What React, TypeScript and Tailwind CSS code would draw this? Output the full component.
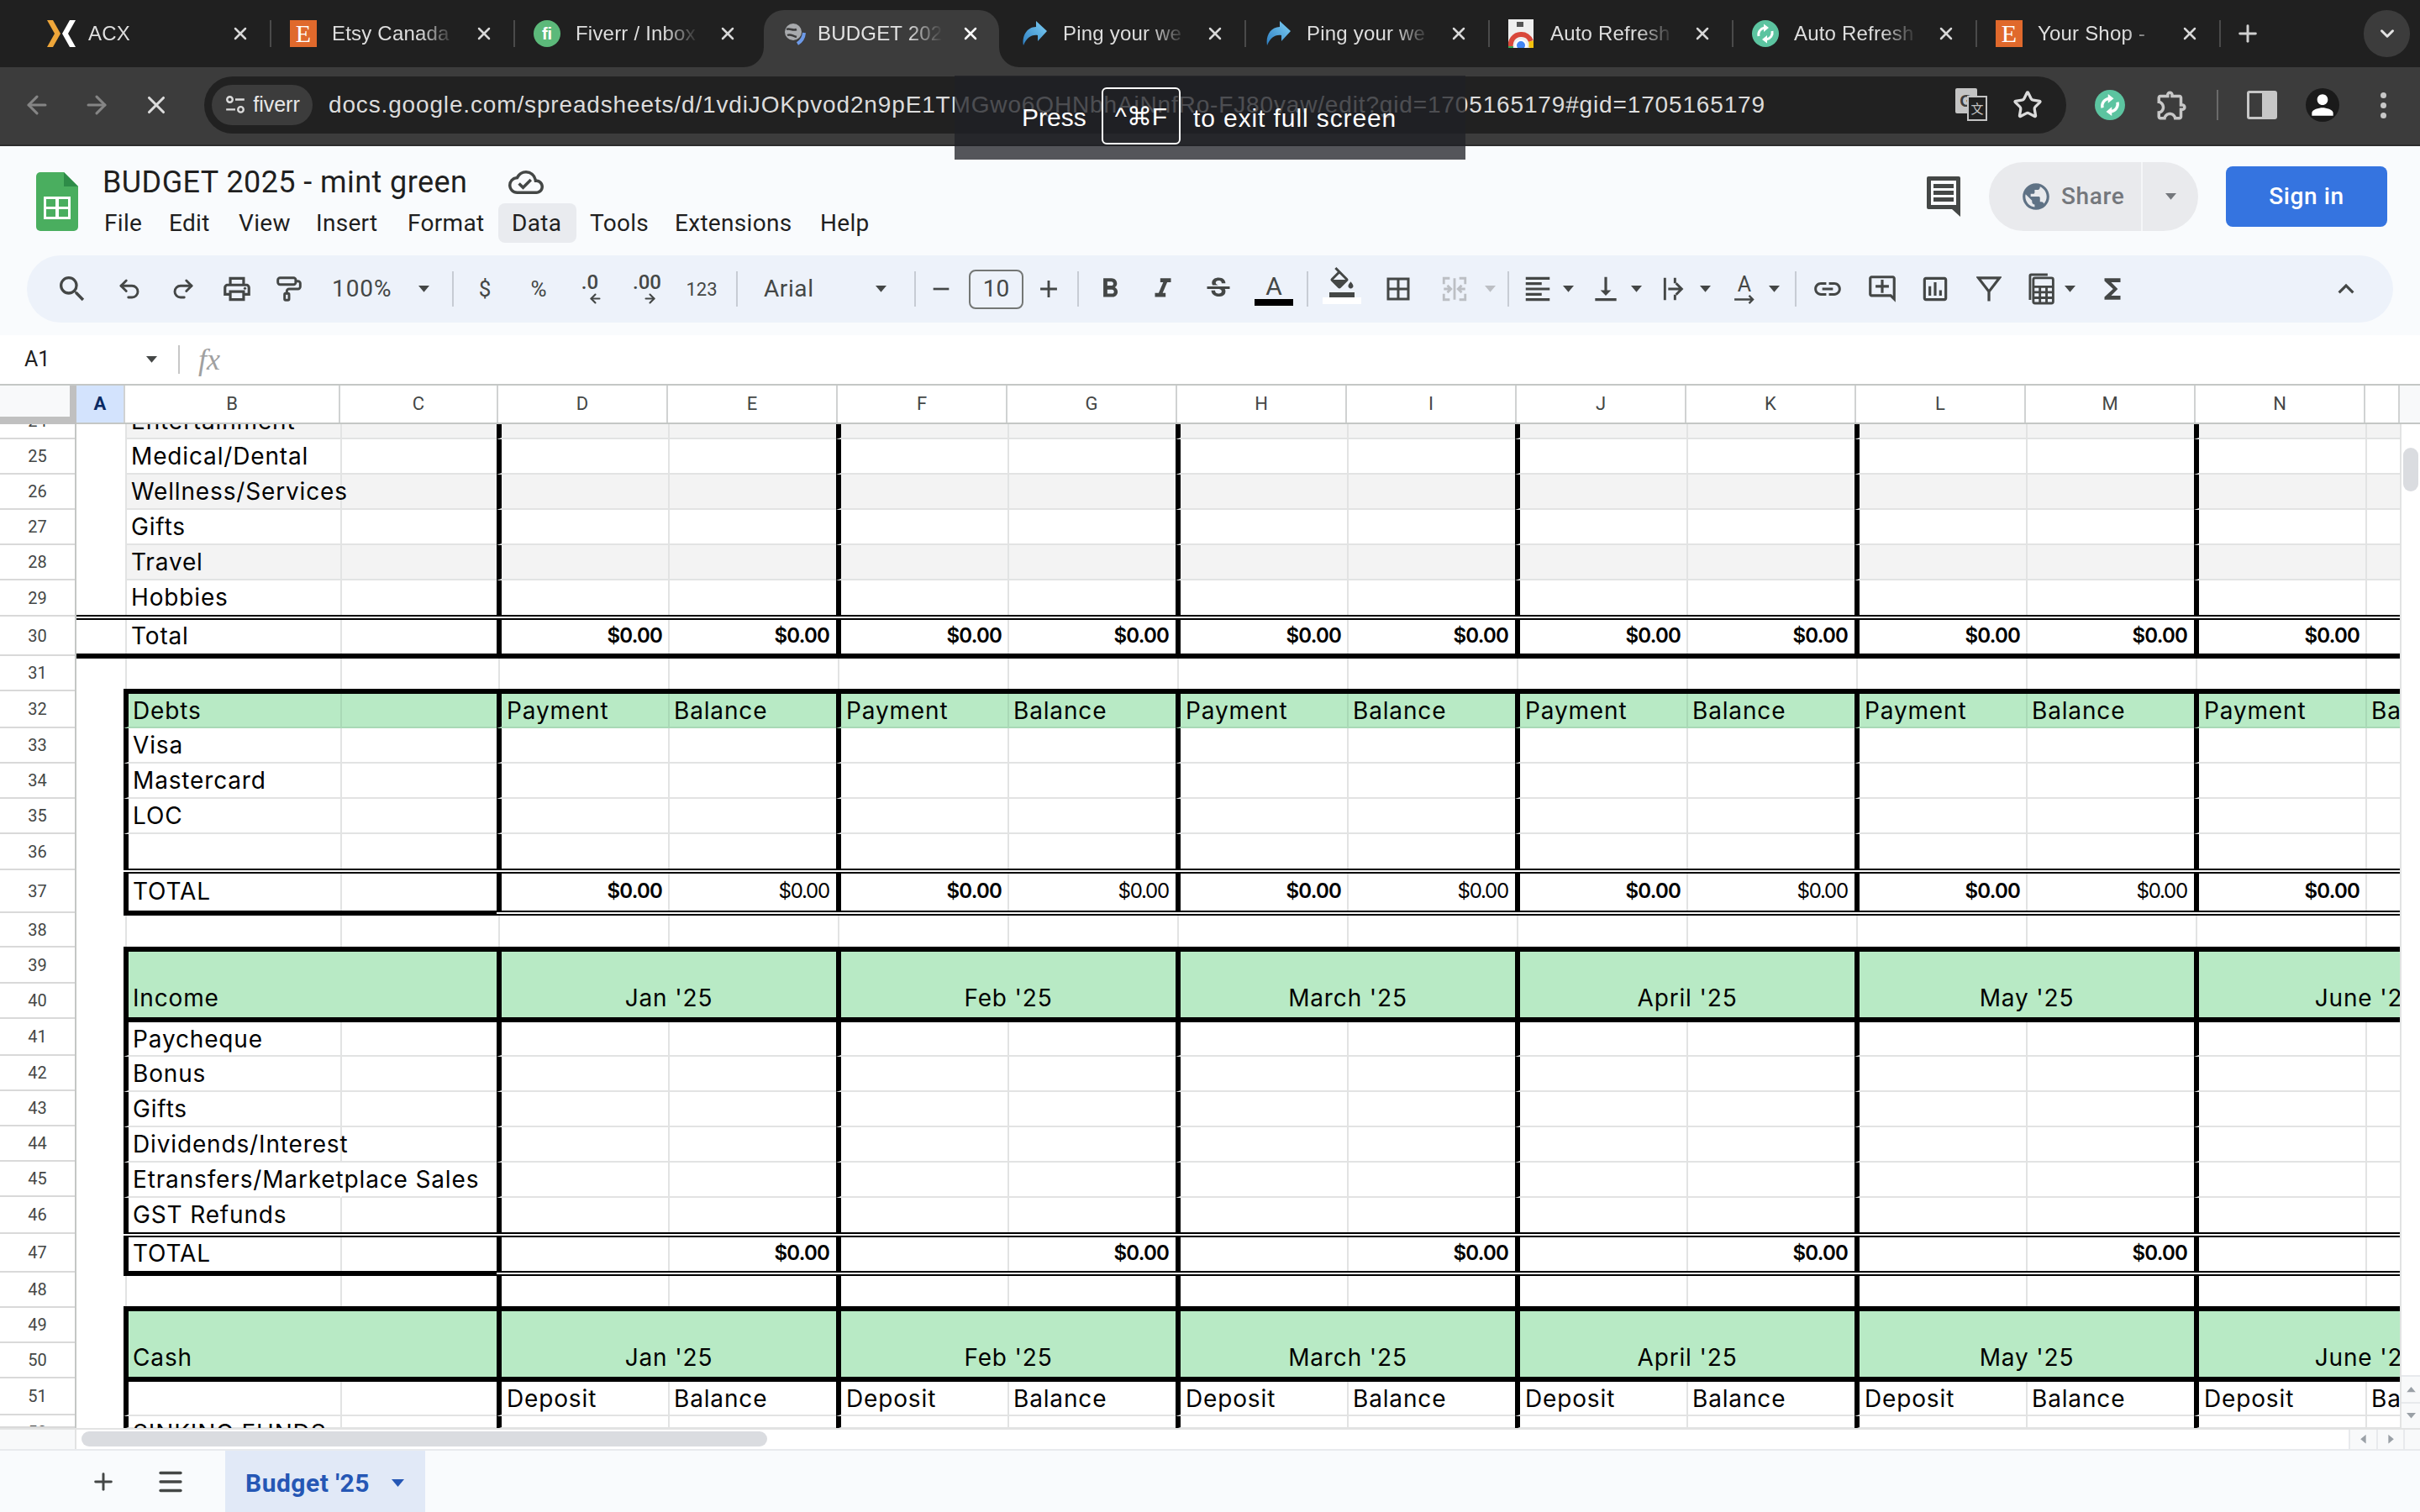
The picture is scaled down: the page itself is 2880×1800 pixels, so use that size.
import React from "react";
import { ArrowLeft, ArrowRight, X, Plus, Star, ChevronDown, Undo2, Redo2, PaintRoller, Menu } from "lucide-react";
import {
  MdSearch, MdOutlinePrint, MdFormatBold, MdFormatItalic, MdStrikethroughS, MdOutlineFormatColorFill,
  MdBorderAll, MdFormatAlignLeft, MdVerticalAlignBottom, MdOutlineAddComment, MdOutlineInsertChart,
  MdLink, MdFunctions, MdExpandLess, MdRemove, MdAdd, MdOutlineExtension, MdPerson, MdPublic,
  MdOutlineCloudDone,
} from "react-icons/md";

const G = "#444746";

function Caret({ color = G, w = 13 }: { color?: string; w?: number }) {
  return (
    <svg width={w} height={w * 0.6} viewBox="0 0 10 6" className="shrink-0">
      <path d="M0 0h10L5 6z" fill={color} />
    </svg>
  );
}

function RefreshCircle({ size = 32 }: { size?: number }) {
  return (
    <svg width={size} height={size} viewBox="0 0 32 32" className="shrink-0">
      <circle cx="16" cy="16" r="16" fill="#5cc4a0" />
      <path d="M8 19c-1-5 2-9 7-10" fill="none" stroke="#fff" strokeWidth="3" />
      <path d="M14 4.5l6 4.500-6 5z" fill="#fff" />
      <path d="M24 13c1 5-2 9-7 10" fill="none" stroke="#fff" strokeWidth="3" />
      <path d="M18 27.500l-6-4.500 6-5z" fill="#fff" />
    </svg>
  );
}

function AcxIcon() {
  return (
    <svg width="36" height="32" viewBox="0 0 36 32" className="shrink-0">
      <path d="M1 0h7l9 16-9 16H1l9-16z" fill="#eea63a" />
      <path d="M35 0h-7l-9 16 9 16h7l-9-16z" fill="#fff" />
    </svg>
  );
}

function EtsyIcon() {
  return (
    <div className="w-8 h-8 shrink-0 bg-[#e0692c] flex items-center justify-center text-white text-[30px] leading-8 [font-family:'Liberation_Serif',serif]">
      E
    </div>
  );
}

function FiverrIcon() {
  return (
    <div className="w-8 h-8 shrink-0 rounded-full bg-[#5cb97a] flex items-center justify-center text-white text-[20px] font-bold leading-8">
      fi
    </div>
  );
}

function SheetsSpin() {
  return (
    <svg width="28" height="28" viewBox="0 0 28 28" className="shrink-0">
      <circle cx="12" cy="12" r="10" fill="#a8aaad" />
      <path d="M4 9c4-2 7 2 12 0M5 16c4-2 6 1 11 2" stroke="#3c3c3c" strokeWidth="2.500" fill="none" />
      <path d="M25 13c-.5 6-3 10-8 13" stroke="#6d9ae8" strokeWidth="4" fill="none" />
    </svg>
  );
}

function PingIcon() {
  return (
    <svg width="32" height="34" viewBox="0 0 32 34" className="shrink-0">
      <defs>
        <linearGradient id="pg" x1="0" y1="1" x2="1" y2="0">
          <stop offset="0" stopColor="#2d7fc2" />
          <stop offset="1" stopColor="#7fd0f5" />
        </linearGradient>
      </defs>
      <path d="M18 2l13 12-11 12v-7C12 18 7 22 3 31 1 20 7 9 18 9z" fill="url(#pg)" />
    </svg>
  );
}

function ChromeCard() {
  return (
    <svg width="30" height="34" viewBox="0 0 30 34" className="shrink-0">
      <rect width="30" height="34" fill="#efefef" />
      <rect x="10" y="3" width="8" height="6" fill="#555" />
      <path d="M3 34a12 13 0 0 1 12-16 12 13 0 0 1 12 8" fill="none" stroke="#d9483b" strokeWidth="6" />
      <path d="M27 26a12 13 0 0 1 0 8" fill="none" stroke="#f4c20d" strokeWidth="6" />
      <path d="M3 34v-2" stroke="#3aa757" strokeWidth="6" />
      <circle cx="15" cy="31" r="6" fill="#4285f4" stroke="#fff" strokeWidth="2" />
    </svg>
  );
}

const tabs: { icon: React.ReactNode; title: string }[] = [
  { icon: <AcxIcon />, title: "ACX" },
  { icon: <EtsyIcon />, title: "Etsy Canada" },
  { icon: <FiverrIcon />, title: "Fiverr / Inbox" },
  { icon: <SheetsSpin />, title: "BUDGET 202" },
  { icon: <PingIcon />, title: "Ping your we" },
  { icon: <PingIcon />, title: "Ping your we" },
  { icon: <ChromeCard />, title: "Auto Refresh" },
  { icon: <RefreshCircle />, title: "Auto Refresh" },
  { icon: <EtsyIcon />, title: "Your Shop -" },
];

function TabStrip() {
  return (
    <div className="h-20 bg-[#202020] flex pl-[33px] shrink-0 [font-family:'Liberation_Sans',sans-serif]">
      {tabs.map((t, i) =>
        i === 3 ? (
          <div key={i} className="relative w-[280px] h-[68px] mt-3 ml-[6px] mr-1 bg-[#3c3c3c] rounded-t-[24px] flex items-center pb-3 pl-[23px] shrink-0">
            <svg width="24" height="24" viewBox="0 0 24 24" className="absolute -left-6 bottom-0">
              <path d="M24 0v24H0A24 24 0 0 0 24 0z" fill="#3c3c3c" />
            </svg>
            <svg width="24" height="24" viewBox="0 0 24 24" className="absolute -right-6 bottom-0">
              <path d="M0 0v24h24A24 24 0 0 1 0 0z" fill="#3c3c3c" />
            </svg>
            {t.icon}
            <div className="ml-[13px] w-[152px] overflow-hidden whitespace-nowrap text-[24px] tracking-[0.2px] text-[#e3e3e3] [mask-image:linear-gradient(90deg,#000_70%,transparent_98%)]">{t.title}</div>
            <X size={24} color="#fff" strokeWidth={2.500} className="ml-[18px] shrink-0" />
          </div>
        ) : (
          <div key={i} className="w-[290px] h-20 flex items-center shrink-0 relative">
            <div className="w-[72px] pl-[22px] shrink-0">{t.icon}</div>
            <div className="w-[150px] overflow-hidden whitespace-nowrap text-[24px] tracking-[0.2px] text-[#dedede] [mask-image:linear-gradient(90deg,#000_70%,transparent_98%)]">{t.title}</div>
            <X size={24} color="#d8d8d8" strokeWidth={2.500} className="ml-[19px] shrink-0" />
            {i !== 2 && <div className="ml-auto w-0.5 h-8 bg-[#4a4a4a]" />}
          </div>
        )
      )}
      <div className="ml-3 w-10 h-20 flex items-center justify-center shrink-0">
        <Plus size={32} color="#d0d0d0" strokeWidth={2.200} />
      </div>
      <div className="ml-auto mr-3 mt-3 w-[55px] h-14 rounded-full bg-[#3c3c3c] flex items-center justify-center">
        <ChevronDown size={26} color="#e3e3e3" strokeWidth={2.800} />
      </div>
    </div>
  );
}

function ChromeToolbar() {
  return (
    <div className="h-[94px] bg-[#3c3c3c] border-b-2 border-[#2c2c2c] flex items-center shrink-0 pb-[2px] [font-family:'Liberation_Sans',sans-serif]">
      <ArrowLeft size={34} color="#858585" strokeWidth={2.200} className="ml-[27px] shrink-0" />
      <ArrowRight size={34} color="#858585" strokeWidth={2.200} className="ml-[37px] shrink-0" />
      <X size={34} color="#dcdcdc" strokeWidth={2.200} className="ml-[37px] shrink-0" />
      <div className="ml-10 w-[2216px] h-[68px] rounded-full bg-[#212121] flex items-center shrink-0">
        <div className="ml-[9px] w-[120px] h-12 rounded-full bg-[#3c3c3c] flex items-center justify-center gap-[8px] shrink-0">
          <svg width="26" height="26" viewBox="0 0 24 24" fill="none" stroke="#dcdcdc" strokeWidth="2.200">
            <circle cx="6" cy="6" r="3" />
            <path d="M12 6h10M2 17h10" />
            <circle cx="18" cy="17" r="3" />
          </svg>
          <span className="text-[25px] text-[#e8e8e8]">fiverr</span>
        </div>
        <div className="ml-[19px] flex-1 min-w-0 overflow-hidden whitespace-nowrap text-[28px] tracking-[0.85px] text-[#dcdcdc]">
          docs.google.com/spreadsheets/d/1vdiJOKpvod2n9pE1TMGwo6QHNbhAiNnfRo-FJ80vaw/edit?gid=1705165179#gid=1705165179
        </div>
        <div className="w-10 h-10 ml-4 relative shrink-0">
          <div className="absolute left-0 top-0 w-[26px] h-[30px] rounded-[2px] bg-[#c4c4c4] text-[#3c3c3c] text-[20px] font-bold leading-[30px] text-center">G</div>
          <div className="absolute left-[14px] top-[9px] w-[24px] h-[30px] border-2 border-[#c4c4c4] bg-[#212121] text-[#c4c4c4] text-[15px] leading-[26px] text-center [font-family:'Noto_Sans_CJK_SC',sans-serif]">文</div>
        </div>
        <Star size={36} color="#dcdcdc" strokeWidth={2.200} className="ml-[28px] mr-[28px] shrink-0" />
      </div>
      <div className="ml-[34px] shrink-0"><RefreshCircle size={36} /></div>
      <MdOutlineExtension size={42} color="#c7c7c7" className="ml-[35px] shrink-0" />
      <div className="ml-[32px] w-0.5 h-9 bg-[#6a6a6a] shrink-0" />
      <div className="ml-[34px] w-9 h-[34px] rounded-[3px] border-[3px] border-[#c7c7c7] flex justify-end shrink-0">
        <div className="w-[15px] h-full bg-[#c7c7c7]" />
      </div>
      <div className="ml-[34px] w-10 h-10 rounded-full bg-[#1a1a1a] flex items-center justify-center overflow-hidden shrink-0">
        <MdPerson size={38} color="#fff" />
      </div>
      <div className="ml-[49px] flex flex-col gap-[5px] shrink-0">
        <div className="w-[7px] h-[7px] rounded-full bg-[#c7c7c7]" />
        <div className="w-[7px] h-[7px] rounded-full bg-[#c7c7c7]" />
        <div className="w-[7px] h-[7px] rounded-full bg-[#c7c7c7]" />
      </div>
    </div>
  );
}

function FullscreenHint() {
  return (
    <div className="absolute left-[1136px] top-[90px] w-[608px] h-[100px] bg-[rgba(32,33,38,0.76)] flex items-center pl-20 text-white text-[30px] [font-family:'Liberation_Sans',sans-serif]">
      <span className="w-[95px] mt-[-1px] shrink-0">Press</span>
      <span className="w-[94px] h-[68px] mt-[-4px] border-2 border-white rounded-[6px] flex items-center justify-center text-[30px] shrink-0">^⌘F</span>
      <span className="ml-[15px] tracking-[0.9px] whitespace-nowrap">to exit full screen</span>
    </div>
  );
}

function SheetsLogo() {
  return (
    <svg width="50" height="70" viewBox="0 0 50 70" className="shrink-0">
      <path d="M5 0h28l17 17v48a5 5 0 0 1-5 5H5a5 5 0 0 1-5-5V5a5 5 0 0 1 5-5z" fill="#4aae5f" />
      <path d="M33 0l17 17H33z" fill="#2e8c48" />
      <rect x="9" y="29" width="32" height="27" fill="#fff" />
      <rect x="12" y="32" width="11" height="9" fill="#4aae5f" />
      <rect x="27" y="32" width="11" height="9" fill="#4aae5f" />
      <rect x="12" y="44" width="11" height="9" fill="#4aae5f" />
      <rect x="27" y="44" width="11" height="9" fill="#4aae5f" />
    </svg>
  );
}

function CommentBubble() {
  return (
    <svg width="40" height="48" viewBox="0 0 40 48" className="shrink-0">
      <path d="M2 0h36a2 2 0 0 1 2 2v46l-10-9H2a2 2 0 0 1-2-2V2a2 2 0 0 1 2-2z" fill={G} />
      <rect x="5" y="5" width="30" height="29" fill="#f9fbfd" />
      <rect x="8" y="9" width="24" height="5" fill={G} />
      <rect x="8" y="17" width="24" height="5" fill={G} />
      <rect x="8" y="25" width="24" height="5" fill={G} />
    </svg>
  );
}

const menus: [string, string][] = [
  ["File", "w-[79px]"], ["Edit", "w-[83px]"], ["View", "w-[92px]"], ["Insert", "w-[109px]"],
  ["Format", "w-[108px]"], ["Data", "w-[93px] pl-4 bg-[#e9ebef] rounded-lg"], ["Tools", "w-[117px] pl-4"],
  ["Extensions", "w-[173px]"], ["Help", "w-[80px]"],
];

function DecIcon({ label, dir }: { label: string; dir: "l" | "r" }) {
  return (
    <div className="flex flex-col items-center text-[#444746] leading-none">
      <span className="text-[24px] font-medium h-[22px] leading-[22px]">{label}</span>
      {dir === "l" ? <ArrowLeft size={17} strokeWidth={3} className="ml-3" /> : <ArrowRight size={17} strokeWidth={3} className="ml-2" />}
    </div>
  );
}

const Sep = ({ ml }: { ml: string }) => <div className={"w-0.5 h-[42px] bg-[#c7ccd4] shrink-0 " + ml} />;
const Ic = ({ ml, children }: { ml: string; children: React.ReactNode }) => (
  <div className={"w-10 h-10 flex items-center justify-center shrink-0 " + ml}>{children}</div>
);
const Cr = ({ ml, color }: { ml: string; color?: string }) => (
  <div className={"w-3 flex justify-center shrink-0 " + ml}><Caret color={color} /></div>
);

function SheetsToolbar() {
  return (
    <div className="mx-8 h-20 rounded-full bg-[#edf2fa] flex items-center shrink-0 [font-family:Roboto,sans-serif] text-[#444746]">
      <Ic ml="ml-[34px]"><MdSearch size={40} color={G} /></Ic>
      <Ic ml="ml-[28px]"><Undo2 size={30} color={G} strokeWidth={2.300} /></Ic>
      <Ic ml="ml-[24px]"><Redo2 size={30} color={G} strokeWidth={2.300} /></Ic>
      <Ic ml="ml-[24px]"><MdOutlinePrint size={38} color={G} /></Ic>
      <Ic ml="ml-[22px]"><PaintRoller size={32} color={G} strokeWidth={2.200} /></Ic>
      <span className="ml-[31px] w-[74px] text-[28px] tracking-[0.9px] shrink-0">100%</span>
      <Cr ml="ml-[29px]" />
      <Sep ml="ml-[28px]" />
      <Ic ml="ml-[17px]"><span className="text-[26px]">$</span></Ic>
      <Ic ml="ml-[24px]"><span className="text-[26px]">%</span></Ic>
      <Ic ml="ml-[21px]"><DecIcon label=".0" dir="l" /></Ic>
      <Ic ml="ml-[28px]"><DecIcon label=".00" dir="r" /></Ic>
      <Ic ml="ml-[25px]"><span className="text-[22px]">123</span></Ic>
      <Sep ml="ml-[21px]" />
      <span className="ml-[31px] w-[90px] text-[28px] tracking-[0.6px] shrink-0">Arial</span>
      <Cr ml="ml-[43px]" />
      <Sep ml="ml-[34px]" />
      <Ic ml="ml-[10px]"><MdRemove size={32} color={G} /></Ic>
      <div className="ml-[13px] w-[65px] h-[47px] rounded-lg border-2 border-[#747775] flex items-center justify-center text-[28px] shrink-0">10</div>
      <Ic ml="ml-[10px]"><MdAdd size={34} color={G} /></Ic>
      <Sep ml="ml-[14px]" />
      <Ic ml="ml-[17px]"><MdFormatBold size={38} color={G} /></Ic>
      <Ic ml="ml-[23px]"><MdFormatItalic size={38} color={G} /></Ic>
      <Ic ml="ml-[26px]"><MdStrikethroughS size={36} color={G} /></Ic>
      <div className={"w-10 flex flex-col items-center shrink-0 ml-[26px] pt-[2px]"}>
        <span className="text-[30px] leading-[30px]">A</span>
        <div className="w-[46px] h-2 bg-black shrink-0" />
      </div>
      <Sep ml="ml-[19px]" />
      <div className={"w-10 flex flex-col items-center shrink-0 ml-[20px] -mt-2"}>
        <MdOutlineFormatColorFill size={36} color={G} />
        <div className="w-[46px] h-2 bg-white shrink-0" />
      </div>
      <Ic ml="ml-[27px]"><MdBorderAll size={36} color={G} /></Ic>
      <Ic ml="ml-[27px]">
        <svg width="34" height="34" viewBox="0 0 24 24" fill="none" stroke="#bcbfc4" strokeWidth="2">
          <path d="M3 8V3h5M16 3h5v5M21 16v5h-5M8 21H3v-5M3 12h6M6 9l3 3-3 3M21 12h-6M18 9l-3 3 3 3M12 3v18" />
        </svg>
      </Ic>
      <Cr ml="ml-[16px]" color="#bcbfc4" />
      <Sep ml="ml-[15px]" />
      <Ic ml="ml-[14px]"><MdFormatAlignLeft size={38} color={G} /></Ic>
      <Cr ml="ml-[10px]" />
      <Ic ml="ml-[19px]"><MdVerticalAlignBottom size={38} color={G} /></Ic>
      <Cr ml="ml-[10px]" />
      <Ic ml="ml-[19px]">
        <svg width="32" height="32" viewBox="0 0 24 24" fill="none" stroke={G} strokeWidth="2.200">
          <path d="M4 2v20M13 2v5M13 17v5M7 12h11M14 7l5 5-5 5" />
        </svg>
      </Ic>
      <Cr ml="ml-[11px]" />
      <Ic ml="ml-[21px]">
        <div className="relative w-8 h-9 flex flex-col items-center">
          <span className="text-[25px] leading-[25px]">A</span>
          <svg width="30" height="12" viewBox="0 0 30 12" fill="none" stroke={G} strokeWidth="2.500">
            <path d="M2 6h24M21 1l5 5-5 5" />
          </svg>
        </div>
      </Ic>
      <Cr ml="ml-[9px]" />
      <Sep ml="ml-[19px]" />
      <Ic ml="ml-[17px]"><MdLink size={38} color={G} /></Ic>
      <Ic ml="ml-[25px]"><MdOutlineAddComment size={38} color={G} /></Ic>
      <Ic ml="ml-[23px]"><MdOutlineInsertChart size={38} color={G} /></Ic>
      <Ic ml="ml-[24px]">
        <svg width="30" height="34" viewBox="0 0 24 27" fill="none" stroke={G} strokeWidth="2.600">
          <path d="M2 3h20l-10 13zM12 15v10" />
        </svg>
      </Ic>
      <Ic ml="ml-[22px]">
        <svg width="34" height="40" viewBox="0 0 26 30" fill="none" stroke={G} strokeWidth="2.200">
          <path d="M3 25V3q0-1 1-1h15" />
          <rect x="6" y="5" width="18" height="23" rx="1.500" />
          <path d="M6 13h18M6 18h18M6 23h18M12 13v15M18 13v15" />
        </svg>
      </Ic>
      <Cr ml="ml-[8px]" />
      <Ic ml="ml-[25px]"><MdFunctions size={38} color={G} /></Ic>
      <div className="ml-auto mr-[36px] w-10 h-10 flex items-center justify-center shrink-0">
        <MdExpandLess size={38} color={G} />
      </div>
    </div>
  );
}

function SheetsHeader() {
  return (
    <div className="h-[225px] bg-[#f9fbfd] shrink-0 flex flex-col [font-family:Roboto,sans-serif]">
      <div className="h-[130px] flex shrink-0">
        <div className="ml-[43px] mt-[31px] shrink-0"><SheetsLogo /></div>
        <div className="ml-[29px] pt-[21px] shrink-0">
          <div className="flex items-center h-11">
            <span className="text-[36px] text-[#1f1f1f] leading-[44px] tracking-[0.42px]">BUDGET 2025 - mint green</span>
            <MdOutlineCloudDone size={42} color={G} className="ml-[49px] shrink-0" />
          </div>
          <div className="flex mt-[3px] text-[28px] text-[#1f1f1f] tracking-[0.3px]">
            {menus.map(([m, c], i) => (
              <div key={m} className={"h-[47px] leading-[47px] shrink-0 " + (i === 0 ? "pl-0.5 " : "") + c}>{m}</div>
            ))}
          </div>
        </div>
        <div className="ml-auto h-[120px] flex items-center mr-[39px]">
          <CommentBubble />
          <div className="ml-[34px] w-[249px] h-[82px] rounded-full bg-[#e9eaed] flex shrink-0">
            <div className="w-[183px] flex items-center pl-[37px] border-r-2 border-[#f5f6f8]">
              <MdPublic size={38} color="#5f7285" />
              <span className="ml-[11px] text-[28px] font-medium tracking-[0.6px] text-[#74777c]">Share</span>
            </div>
            <div className="flex-1 flex items-center justify-center"><Caret color="#74777c" /></div>
          </div>
          <div className="ml-[33px] w-[192px] h-[72px] rounded-lg bg-[#3574e0] text-white text-[28px] tracking-[0.6px] font-medium flex items-center justify-center shrink-0">Sign in</div>
        </div>
      </div>
      <SheetsToolbar />
    </div>
  );
}

function FormulaBar() {
  return (
    <div className="h-[58px] bg-white flex items-center shrink-0 [font-family:Roboto,sans-serif]">
      <span className="ml-[29px] w-[145px] text-[25px] text-[#1f1f1f]">A1</span>
      <Caret />
      <div className="ml-[25px] w-0.5 h-[34px] bg-[#c7c7c7]" />
      <span className="ml-[22px] text-[36px] leading-[40px] italic text-[#a0a0a0] [font-family:'Liberation_Serif',serif]">fx</span>
    </div>
  );
}

const headCols: [string, string][] = [
  ["A", "w-[58px] bg-[#d3e3fd] text-[#0b2a63] font-bold"], ["B", "w-[256px]"], ["C", "w-[188px]"],
  ["D", "w-[202px]"], ["E", "w-[202px]"], ["F", "w-[202px]"], ["G", "w-[202px]"], ["H", "w-[202px]"],
  ["I", "w-[202px]"], ["J", "w-[202px]"], ["K", "w-[202px]"], ["L", "w-[202px]"], ["M", "w-[202px]"],
  ["N", "w-[202px]"], ["", "w-[41px]"],
];

function ColumnHeader() {
  return (
    <div className="h-12 flex shrink-0 bg-white border-t-2 border-[#c4c7c5] text-[22px] text-[#444746] [font-family:Roboto,sans-serif]">
      <div className="w-[91px] h-[46px] shrink-0 bg-[#c0c0c0] pr-2 pb-[9px]">
        <div className="w-full h-full bg-[#f8f9fa]" />
      </div>
      <div className="flex flex-1 border-b-2 border-[#c4c7c5]">
        {headCols.map(([l, c]) => (
          <div key={l + c} className={"h-full flex items-center justify-center pb-[2px] border-r-2 border-[#d0d2d2] shrink-0 " + c}>{l}</div>
        ))}
        <div className="flex-1 bg-[#f8f9fa]" />
      </div>
    </div>
  );
}

const labels: [number, string][] = [
  [24, "h-[18px]"], [25, "h-[42px]"], [26, "h-[42px]"], [27, "h-[42px]"], [28, "h-[42px]"], [29, "h-[43px]"],
  [30, "h-[47px]"], [31, "h-[42px]"], [32, "h-[44px]"], [33, "h-[42px]"], [34, "h-[42px]"], [35, "h-[42px]"],
  [36, "h-[43px]"], [37, "h-[51px]"], [38, "h-[41px]"], [39, "h-[43px]"], [40, "h-[42px]"], [41, "h-[44px]"],
  [42, "h-[42px]"], [43, "h-[42px]"], [44, "h-[42px]"], [45, "h-[42px]"], [46, "h-[44px]"], [47, "h-[46px]"],
  [48, "h-[42px]"], [49, "h-[42px]"], [50, "h-[42px]"], [51, "h-[44px]"], [52, "h-[15px]"],
];

function RowLabels() {
  return (
    <div className="w-[91px] shrink-0 bg-white border-r-2 border-[#c4c7c5] [font-family:Roboto,sans-serif] text-[20px] text-[#444746]">
      {labels.map(([n, h]) => (
        <div
          key={n}
          className={
            "overflow-hidden flex justify-center border-b-2 border-[#d9d9d9] " +
            h + " " + (n === 24 ? "items-end" : n === 52 ? "items-start" : "items-center")
          }
        >
          <span className="leading-[40px] shrink-0">{n}</span>
        </div>
      ))}
    </div>
  );
}

const cellFont = "text-[28px] tracking-[0.85px] text-black [font-family:Inter,sans-serif] font-normal";

type RowProps = {
  h: string;
  label?: string;
  values?: string[];
  left?: boolean;
  thick?: boolean;
  band?: boolean;
  border?: boolean;
  green?: boolean;
  noC?: boolean;
  clip?: "top" | "bottom";
};

const dWidth = "w-[204px] border-l-[6px] border-l-black";
const eWidth = "w-[200px] border-l-2";

function Value({ v, even }: { v: string; even: boolean }) {
  if (!v) return null;
  if (v === "$0.00" || v === "$0.00b") {
    const bold = v === "$0.00b";
    return (
      <div className={"w-full text-right text-[24px] " + (even ? "pr-[7px] " : "pr-2 ") + (bold ? "font-semibold tracking-[-0.8px]" : "font-normal tracking-[-1.2px]")}>
        $0.00
      </div>
    );
  }
  return <div className={even ? "pl-[6px]" : "pl-[5px]"}>{v}</div>;
}

function Row({ h, label, values, left, thick = true, band, border = true, green, noC, clip }: RowProps) {
  const bg = green ? "bg-[#b8eac5]" : band ? "bg-[#f3f3f3]" : "bg-white";
  const lineB = border ? (green ? "border-b-2 border-b-[#a9d9b6]" : "border-b-2 border-b-[#e2e3e3]") : "pb-[2px]";
  const thinCol = green ? "border-l-[#a9d9b6]" : "border-l-[#e2e3e3]";
  const base = "h-full shrink-0 flex whitespace-nowrap " + (clip === "top" ? "items-end " : clip === "bottom" ? "items-start " : "items-center ") + bg + " " + lineB + " ";
  const lh = "leading-[40px] ";
  const vals = values ?? ["", "", "", "", "", "", "", "", "", "", "", ""];
  return (
    <div className={"flex w-[2765px] overflow-hidden shrink-0 bg-white " + h + " " + cellFont}>
      <div className={(left ? "w-[56px]" : "w-[58px]") + " shrink-0"} />
      <div className={base + lh + (left ? "w-[258px] border-l-[6px] border-l-black" : "w-[256px] border-l-2 " + thinCol)}>
        {label && <span className={"pl-[5px] relative z-10"}>{label}</span>}
      </div>
      <div className={base + (thick ? "w-[186px] " : "w-[188px] ") + (noC ? "border-l-2 border-l-white" : "border-l-2 " + thinCol)} />
      {vals.map((v, i) => {
        const even = i % 2 === 0;
        const last = i === 11;
        const w = last
          ? "w-[41px] border-l-2 " + thinCol
          : even
            ? thick ? dWidth : "w-[202px] border-l-2 " + thinCol
            : thick ? eWidth + " " + thinCol : "w-[202px] border-l-2 " + thinCol;
        return (
          <div key={i} className={base + lh + w}>
            <Value v={v} even={even} />
          </div>
        );
      })}
    </div>
  );
}

function HeadRow({ h, label }: { h: string; label: string }) {
  const months = ["Jan '25", "Feb '25", "March '25", "April '25", "May '25", "June '25"];
  return (
    <div className={"flex w-[2765px] overflow-hidden shrink-0 bg-white " + h + " " + cellFont}>
      <div className="w-[56px] shrink-0" />
      <div className="w-[444px] shrink-0 bg-[#b8eac5] border-l-[6px] border-black flex items-end leading-[42px] pl-[5px] pb-[2px]">{label}</div>
      {months.map((m) => (
        <div key={m} className="w-[404px] shrink-0 bg-[#b8eac5] border-l-[6px] border-black flex items-end justify-center leading-[42px] whitespace-nowrap pb-[2px]">{m}</div>
      ))}
    </div>
  );
}

function Rule({ kind, from }: { kind: "double" | "thick" | "box"; from: "label" | "b" }) {
  const spacer = from === "b" ? <div className="w-[56px] shrink-0 bg-white" /> : null;
  const dbl = (
    <div className="flex-1 h-full flex flex-col justify-between bg-white">
      <div className="h-0.5 bg-black" />
      <div className="h-0.5 bg-black" />
    </div>
  );
  return (
    <div className="h-[6px] w-[2765px] flex shrink-0">
      {spacer}
      {kind === "double" && dbl}
      {kind === "thick" && <div className="flex-1 h-full bg-black" />}
      {kind === "box" && (
        <>
          <div className="w-[444px] h-full bg-black shrink-0" />
          {dbl}
        </>
      )}
    </div>
  );
}

const pair = (a: string, b: string) => [a, b, a, b, a, b, a, b, a, b, a, b];
const totals = ["$0.00b", "$0.00b", "$0.00b", "$0.00b", "$0.00b", "$0.00b", "$0.00b", "$0.00b", "$0.00b", "$0.00b", "$0.00b", ""];
const debtTotals = ["$0.00b", "$0.00", "$0.00b", "$0.00", "$0.00b", "$0.00", "$0.00b", "$0.00", "$0.00b", "$0.00", "$0.00b", ""];
const incomeTotals = ["", "$0.00b", "", "$0.00b", "", "$0.00b", "", "$0.00b", "", "$0.00b", "", ""];

function Cells() {
  return (
    <div className="w-[2765px] shrink-0 flex flex-col overflow-hidden">
      <Row h="h-[18px]" label="Entertainment" band clip="top" />
      <Row h="h-[42px]" label="Medical/Dental" />
      <Row h="h-[42px]" label="Wellness/Services" band />
      <Row h="h-[42px]" label="Gifts" />
      <Row h="h-[42px]" label="Travel" band />
      <Row h="h-[41px]" label="Hobbies" border={false} />
      <Rule kind="double" from="label" />
      <Row h="h-[40px]" label="Total" values={totals} border={false} />
      <Rule kind="thick" from="label" />
      <Row h="h-[36px]" thick={false} border={false} />
      <Rule kind="thick" from="b" />
      <Row h="h-[41px]" label="Debts" left green values={pair("Payment", "Balance")} />
      <Row h="h-[42px]" label="Visa" left />
      <Row h="h-[42px]" label="Mastercard" left />
      <Row h="h-[42px]" label="LOC" left />
      <Row h="h-[41px]" left border={false} />
      <Rule kind="double" from="b" />
      <Row h="h-[44px]" label="TOTAL" left values={debtTotals} border={false} />
      <Rule kind="box" from="b" />
      <Row h="h-[37px]" thick={false} border={false} />
      <Rule kind="thick" from="b" />
      <HeadRow h="h-[78px]" label="Income" />
      <Rule kind="thick" from="b" />
      <Row h="h-[41px]" label="Paycheque" left />
      <Row h="h-[42px]" label="Bonus" left />
      <Row h="h-[42px]" label="Gifts" left />
      <Row h="h-[42px]" label="Dividends/Interest" left />
      <Row h="h-[42px]" label="Etransfers/Marketplace Sales" left noC />
      <Row h="h-[41px]" label="GST Refunds" left border={false} />
      <Rule kind="double" from="b" />
      <Row h="h-[40px]" label="TOTAL" left values={incomeTotals} border={false} />
      <Rule kind="box" from="b" />
      <Row h="h-[36px]" border={false} />
      <Rule kind="thick" from="b" />
      <HeadRow h="h-[78px]" label="Cash" />
      <Rule kind="thick" from="b" />
      <Row h="h-[41px]" left values={pair("Deposit", "Balance")} />
      <Row h="h-[15px]" label="SINKING FUNDS" left clip="bottom" />
    </div>
  );
}

function VScroll() {
  return (
    <div className="w-6 shrink-0 bg-white border-l-2 border-[#e2e3e3] flex flex-col">
      <div className="ml-[2px] mt-7 w-[18px] h-[52px] rounded-full bg-[#dadce0]" />
      <div className="mt-auto h-[63px] bg-[#f8f9fa] flex flex-col border-t-2 border-[#e8eaed]">
        <div className="h-8 flex items-center justify-center border-b-2 border-[#e8eaed]">
          <div className="rotate-180"><Caret color="#9aa0a6" w={11} /></div>
        </div>
        <div className="flex-1 flex items-center justify-center"><Caret color="#9aa0a6" w={11} /></div>
      </div>
    </div>
  );
}

function HScroll() {
  return (
    <div className="h-[25px] shrink-0 flex bg-white border-t-2 border-[#e2e3e3]">
      <div className="w-[91px] shrink-0 bg-[#f8f9fa] border-r-2 border-[#e2e3e3]" />
      <div className="ml-[6px] mt-[2px] w-[816px] h-[18px] rounded-full bg-[#dadce0] shrink-0" />
      <div className="ml-auto w-[33px] bg-[#f8f9fa] border-l-2 border-[#e8eaed] flex items-center justify-center">
        <div className="rotate-90"><Caret color="#9aa0a6" w={11} /></div>
      </div>
      <div className="w-[32px] bg-[#f8f9fa] border-l-2 border-[#e8eaed] flex items-center justify-center">
        <div className="-rotate-90"><Caret color="#9aa0a6" w={11} /></div>
      </div>
      <div className="w-5 bg-[#f8f9fa] border-l-2 border-[#e8eaed]" />
    </div>
  );
}

function SheetTabs() {
  return (
    <div className="flex-1 bg-[#f9fbfd] border-t-2 border-[#e8eaed] flex [font-family:Roboto,sans-serif]">
      <Plus size={32} color={G} strokeWidth={2.200} className="ml-[107px] self-center shrink-0" />
      <Menu size={36} color={G} strokeWidth={2.200} className="ml-[46px] self-center shrink-0" />
      <div className="ml-[47px] w-[238px] bg-[#e1e9f7] flex items-center pl-6 pt-1 shrink-0">
        <span className="text-[30px] font-bold text-[#2557b5] w-[174px] tracking-[0.5px] whitespace-nowrap">Budget '25</span>
        <Caret color="#2557b5" w={15} />
      </div>
    </div>
  );
}

export default function App() {
  return (
    <div className="relative w-[2880px] h-[1800px] overflow-hidden flex flex-col bg-white">
      <TabStrip />
      <ChromeToolbar />
      <SheetsHeader />
      <FormulaBar />
      <ColumnHeader />
      <div className="h-[1195px] flex shrink-0 overflow-hidden">
        <RowLabels />
        <Cells />
        <VScroll />
      </div>
      <HScroll />
      <SheetTabs />
      <FullscreenHint />
    </div>
  );
}
